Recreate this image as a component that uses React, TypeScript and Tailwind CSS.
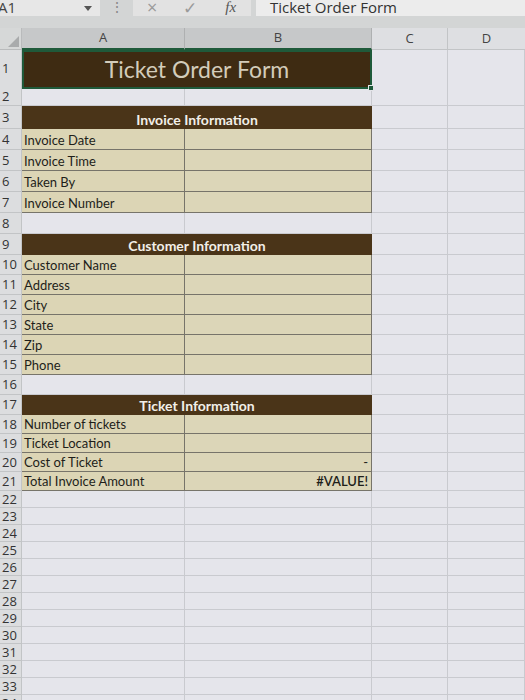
import React from 'react';

type Row =
  | { n: number; h: string; kind: 'title'; text: string }
  | { n: number; h: string; kind: 'head'; text: string }
  | { n: number; h: string; kind: 'data'; label: string; value?: string; bold?: boolean }
  | { n: number; h: string; kind: 'empty' };

const rows: Row[] = [
  { n: 1, h: 'h-[38px]', kind: 'title', text: 'Ticket Order Form' },
  { n: 2, h: 'h-[18px]', kind: 'empty' },
  { n: 3, h: 'h-[23px]', kind: 'head', text: 'Invoice Information' },
  { n: 4, h: 'h-[21px]', kind: 'data', label: 'Invoice Date' },
  { n: 5, h: 'h-[21px]', kind: 'data', label: 'Invoice Time' },
  { n: 6, h: 'h-[21px]', kind: 'data', label: 'Taken By' },
  { n: 7, h: 'h-[21px]', kind: 'data', label: 'Invoice Number' },
  { n: 8, h: 'h-[21px]', kind: 'empty' },
  { n: 9, h: 'h-[21px]', kind: 'head', text: 'Customer Information' },
  { n: 10, h: 'h-[20px]', kind: 'data', label: 'Customer Name' },
  { n: 11, h: 'h-[20px]', kind: 'data', label: 'Address' },
  { n: 12, h: 'h-[20px]', kind: 'data', label: 'City' },
  { n: 13, h: 'h-[20px]', kind: 'data', label: 'State' },
  { n: 14, h: 'h-[20px]', kind: 'data', label: 'Zip' },
  { n: 15, h: 'h-[20px]', kind: 'data', label: 'Phone' },
  { n: 16, h: 'h-[20px]', kind: 'empty' },
  { n: 17, h: 'h-[20px]', kind: 'head', text: 'Ticket Information' },
  { n: 18, h: 'h-[19px]', kind: 'data', label: 'Number of tickets' },
  { n: 19, h: 'h-[19px]', kind: 'data', label: 'Ticket Location' },
  { n: 20, h: 'h-[19px]', kind: 'data', label: 'Cost of Ticket', value: '-' },
  { n: 21, h: 'h-[19px]', kind: 'data', label: 'Total Invoice Amount', value: '#VALUE!', bold: true },
];
for (let n = 22; n <= 34; n++) rows.push({ n, h: 'h-[17px]', kind: 'empty' });

const grid = 'grid grid-cols-[22px_163px_187px_76px_1fr]';
const emptyCell = 'border-r border-b border-[#c9cacf] bg-[#e5e5eb]';

function RowHeader({ n }: { n: number }) {
  return (
    <div className="flex items-center border-r border-b border-[#c2c4c6] bg-[#dcdddf] pl-[2px] text-[13px] leading-none text-[#333]">
      {n}
    </div>
  );
}

function SheetRow({ row }: { row: Row }) {
  return (
    <div className={`${grid} ${row.h}`}>
      <RowHeader n={row.n} />
      {row.kind === 'title' && (
        <div className="relative col-span-2 flex items-center justify-center border-2 border-[#1f5a3a] bg-[#3e2b12] font-['Lato',sans-serif] text-[23px] text-[#d3ccba]">
          {row.text}
          <span className="absolute -right-[4px] -bottom-[4px] h-[6px] w-[6px] border border-[#e3e4e8] bg-[#1f5a3a]" />
        </div>
      )}
      {row.kind === 'head' && (
        <div className="col-span-2 flex items-end justify-center bg-[#4a3418] pb-[2px] font-['Lato',sans-serif] text-[14px] leading-none font-bold text-[#f2efe8]">
          {row.text}
        </div>
      )}
      {row.kind === 'data' && (
        <>
          <div className="flex items-end border-r border-b border-[#77746a] bg-[#dcd5b5] pb-[2px] pl-[2px] font-['Lato',sans-serif] text-[13px] leading-none text-[#1e1e1a]">
            {row.label}
          </div>
          <div
            className={`flex items-end justify-end border-r border-b border-[#77746a] bg-[#dcd6b8] pr-[3px] pb-[2px] font-['Lato',sans-serif] text-[13px] leading-none text-[#1e1e1a] ${
              row.bold ? 'font-semibold' : ''
            }`}
          >
            {row.value}
          </div>
        </>
      )}
      {row.kind === 'empty' && (
        <>
          <div className={emptyCell} />
          <div className={emptyCell} />
        </>
      )}
      <div className={emptyCell} />
      <div className={emptyCell} />
    </div>
  );
}

export default function App() {
  return (
    <div className="h-[700px] w-[525px] overflow-hidden bg-[#d3d5d5] font-['Open_Sans',sans-serif]">
      {/* formula bar */}
      <div className="flex h-[16px] items-end overflow-hidden text-[#444]">
        <div className="flex h-[16px] w-[100px] items-end justify-between bg-[#e7e7e7] pr-[8px] text-[15px] leading-none">
          <span className="-ml-[2px] mb-[1px]">A1</span>
          <span className="mb-[5px] h-0 w-0 border-x-[4px] border-t-[5px] border-x-transparent border-t-[#555]" />
        </div>
        <div className="flex w-[33px] justify-center pb-[2px] text-[14px] leading-none text-[#888]">⋮</div>
        <div className="flex h-[16px] w-[118px] items-end bg-[#e2e2e2] text-[#9a9a9a]">
          <span className="ml-[14px] text-[18px] leading-none">×</span>
          <span className="ml-[26px] text-[17px] leading-none">✓</span>
          <span className="ml-[28px] mb-[1px] font-['Liberation_Serif',serif] text-[15px] leading-none text-[#555] italic">fx</span>
        </div>
        <div className="ml-[5px] flex h-[16px] flex-1 items-end bg-[#ececec] pl-[14px] text-[15px] leading-none text-[#333]">
          <span className="mb-[1px]">Ticket Order Form</span>
        </div>
      </div>
      <div className="h-[12px]" />
      {/* column headers */}
      <div className={`${grid} h-[22px] text-[13px] text-[#444]`}>
        <div className="flex items-end justify-end border-r border-b border-[#b9bbbc] bg-[#d6d8d8] p-[2px]">
          <span className="h-0 w-0 border-b-[11px] border-l-[11px] border-l-transparent border-b-[#a9abac]" />
        </div>
        <div className="flex items-center justify-center border-r border-b-2 border-[#aeb0b1] border-b-[#1f5a3a] bg-[#c6c8c9]">A</div>
        <div className="flex items-center justify-center border-r border-b-2 border-[#aeb0b1] border-b-[#1f5a3a] bg-[#c6c8c9]">B</div>
        <div className="flex items-center justify-center border-r border-b border-[#c2c4c6] bg-[#dedfe2]">C</div>
        <div className="flex items-center justify-center border-b border-[#c2c4c6] bg-[#dedfe2]">D</div>
      </div>
      {rows.map((r) => (
        <SheetRow key={r.n} row={r} />
      ))}
    </div>
  );
}
